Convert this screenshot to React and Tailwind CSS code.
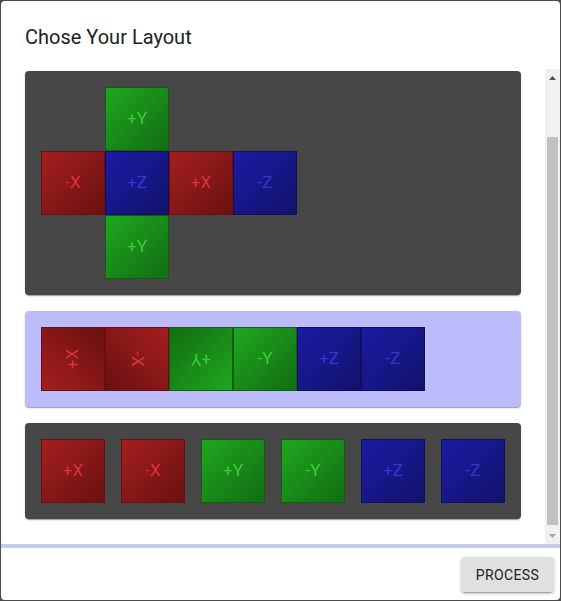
import React from 'react';

const FACE_STYLES = {
  red: 'from-[#a61e1e] to-[#6a1111] border-[#6a0f0f] text-[#d83434]',
  green: 'from-[#1fa71f] to-[#126e12] border-[#0f5e0f] text-[#3ccc3c]',
  blue: 'from-[#1b1ba6] to-[#12126a] border-[#0f0f5e] text-[#3636d4]',
};

function Face({ label, color, rotate = '' }) {
  return (
    <div
      className={`w-16 h-16 shrink-0 border bg-linear-to-br flex items-center justify-center text-[17px] ${FACE_STYLES[color]} ${rotate}`}
    >
      {label}
    </div>
  );
}

function Card({ selected, children }) {
  return (
    <div
      className={`rounded p-4 shadow-[0_2px_1px_-1px_rgba(0,0,0,0.2),0_1px_1px_0_rgba(0,0,0,0.14),0_1px_3px_0_rgba(0,0,0,0.12)] ${
        selected ? 'bg-[#bcbcfc]' : 'bg-[#474747]'
      }`}
    >
      {children}
    </div>
  );
}

function ScrollBar() {
  return (
    <div className="w-[15px] shrink-0 bg-[#f1f1f1] flex flex-col">
      <div className="h-[17px] flex items-center justify-center">
        <svg width="7" height="4" viewBox="0 0 7 4">
          <path d="M3.5 0 L7 4 L0 4 Z" fill="#505050" />
        </svg>
      </div>
      <div className="flex-1 flex flex-col px-[2px]">
        <div className="mt-[51px] h-[388px] bg-[#c1c1c1]" />
      </div>
      <div className="h-[17px] flex items-center justify-center">
        <svg width="7" height="4" viewBox="0 0 7 4">
          <path d="M0 0 L7 0 L3.5 4 Z" fill="#a3a3a3" />
        </svg>
      </div>
    </div>
  );
}

export default function App() {
  return (
    <div className="w-[561px] h-[601px] bg-[#4c4c4c] p-px font-['Roboto',sans-serif]">
      <div className="h-[599px] w-[559px] bg-white rounded flex flex-col overflow-hidden">
        {/* Title */}
        <h2 className="h-[68px] px-6 pt-5 pb-4 text-xl leading-8 font-normal text-[#212121] shrink-0">
          Chose Your Layout
        </h2>

        {/* Layout choices */}
        <div className="h-[475px] flex border-b-4 border-[#c5cae9] shrink-0 box-content">
          <div className="flex-1 overflow-hidden px-6 pt-[2px] flex flex-col gap-4">
            {/* Cross */}
            <Card>
              <div className="flex flex-col">
                <div className="flex pl-16">
                  <Face label="+Y" color="green" />
                </div>
                <div className="flex">
                  <Face label="-X" color="red" />
                  <Face label="+Z" color="blue" />
                  <Face label="+X" color="red" />
                  <Face label="-Z" color="blue" />
                </div>
                <div className="flex pl-16">
                  <Face label="+Y" color="green" />
                </div>
              </div>
            </Card>

            {/* Strip */}
            <Card selected>
              <div className="flex">
                <Face label="+X" color="red" rotate="-rotate-90" />
                <Face label="-X" color="red" rotate="rotate-90" />
                <Face label="+Y" color="green" rotate="rotate-180" />
                <Face label="-Y" color="green" />
                <Face label="+Z" color="blue" />
                <Face label="-Z" color="blue" />
              </div>
            </Card>

            {/* Separate faces */}
            <Card>
              <div className="flex gap-4">
                <Face label="+X" color="red" />
                <Face label="-X" color="red" />
                <Face label="+Y" color="green" />
                <Face label="-Y" color="green" />
                <Face label="+Z" color="blue" />
                <Face label="-Z" color="blue" />
              </div>
            </Card>
          </div>
          <ScrollBar />
        </div>

        {/* Actions */}
        <div className="flex justify-end pt-[9px] pb-2 pr-[6px]">
          <button className="h-[35px] w-[93px] rounded bg-[#e0e0e0] text-sm font-normal uppercase tracking-[0.4px] text-[#212121] shadow-[0_3px_1px_-2px_rgba(0,0,0,0.2),0_2px_2px_0_rgba(0,0,0,0.14),0_1px_5px_0_rgba(0,0,0,0.12)]">
            Process
          </button>
        </div>
      </div>
    </div>
  );
}
